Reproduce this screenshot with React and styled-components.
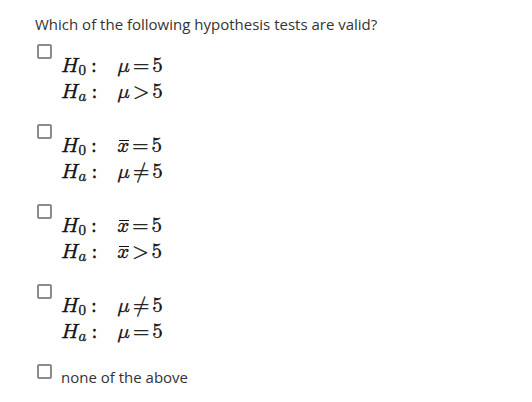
import styled, { createGlobalStyle } from "styled-components";

const GlobalStyle = createGlobalStyle`
  body {
    margin: 0;
    background: #fff;
    font-family: "Open Sans", "Liberation Sans", sans-serif;
    color: #333;
  }
`;

const MU = "\u{1D707}";
const XI = "\u{1D465}";
const HI = "\u{1D43B}";
const AI = "\u{1D44E}";

const questions = [
  { h0: ["mu", "=", "5"], ha: ["mu", ">", "5"] },
  { h0: ["xbar", "=", "5"], ha: ["mu", "≠", "5"] },
  { h0: ["xbar", "=", "5"], ha: ["xbar", ">", "5"] },
  { h0: ["mu", "≠", "5"], ha: ["mu", "=", "5"] },
];

export default function App() {
  return (
    <Page>
      <GlobalStyle />
      <Question>Which of the following hypothesis tests are valid?</Question>
      <Answers>
        {questions.map((q, i) => (
          <Answer key={i}>
            <Box />
            <MathBlock>
              <Hyp sub="0" expr={q.h0} />
              <Hyp sub={AI} expr={q.ha} />
            </MathBlock>
          </Answer>
        ))}
        <Answer>
          <Box />
          <Label>none of the above</Label>
        </Answer>
      </Answers>
    </Page>
  );
}

function Hyp({ sub, expr }) {
  const [lhs, op, rhs] = expr;
  return (
    <>
      <Lhs>
        {HI}
        <Sub>{sub}</Sub>
        <Colon>:</Colon>
      </Lhs>
      <Rhs>
        {lhs === "mu" ? MU : <XBar>{XI}</XBar>}
        <Op>{op}</Op>
        {rhs}
      </Rhs>
    </>
  );
}

const Page = styled.div`
  padding: 14px 35px 0;
`;

const Question = styled.div`
  font-size: 15px;
  line-height: 20px;
`;

const Answers = styled.div`
  display: flex;
  flex-direction: column;
  margin-top: 10px;
`;

const Answer = styled.div`
  display: flex;
  align-items: flex-start;
  gap: 9px;
  min-height: 80px;
  &:last-child {
    min-height: 0;
  }
`;

const Box = styled.span`
  flex: none;
  width: 11px;
  height: 11px;
  margin-left: 2px;
  border: 2px solid #8b8b8f;
  border-radius: 2px;
`;

const Label = styled.span`
  font-size: 15px;
  line-height: 20px;
  margin-top: 3px;
`;

const MathBlock = styled.div`
  display: grid;
  grid-template-columns: auto auto;
  justify-content: start;
  row-gap: 1px;
  margin-top: 10px;
  font-family: "Latin Modern Math", "STIX Two Math", serif;
  font-size: 21px;
  line-height: 23px;
  color: #111;
  -webkit-text-stroke: 0.35px #111;
`;

const Lhs = styled.span`
  white-space: nowrap;
`;

const Rhs = styled.span`
  white-space: nowrap;
  padding-left: 20px;
`;

const Sub = styled.span`
  font-size: 15px;
  position: relative;
  top: 3px;
`;

const Colon = styled.span`
  margin-left: 5px;
`;

const Op = styled.span`
  margin: 0 3px;
`;

const XBar = styled.span`
  position: relative;
  &::after {
    content: "";
    position: absolute;
    left: 2px;
    right: 0;
    top: 5px;
    border-top: 1.3px solid currentColor;
  }
`;
